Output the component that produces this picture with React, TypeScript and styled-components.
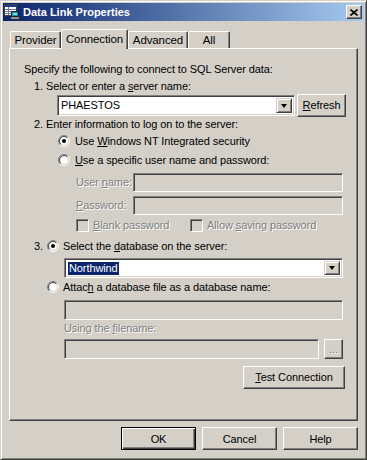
import styled, { createGlobalStyle } from "styled-components";

const FACE = "#D4D0C8";
const SHADOW = "#808080";
const DARK = "#404040";

const GlobalStyle = createGlobalStyle`
  html, body {
    margin: 0;
    padding: 0;
    background: ${FACE};
  }
  body {
    font-family: "Liberation Sans", Arial, sans-serif;
    font-size: 11px;
    letter-spacing: -0.1px;
    color: #000;
  }
`;

// Classic Win2000 radio drawn as arcs
function Radio({ checked }: { checked?: boolean }) {
  const arc = (r: number, topLeft: boolean) => {
    const d = r * 0.7071;
    const a = `${6 - d} ${6 + d}`;
    const b = `${6 + d} ${6 - d}`;
    return topLeft
      ? `M${a} A${r} ${r} 0 0 1 ${b}`
      : `M${b} A${r} ${r} 0 0 1 ${a}`;
  };
  return (
    <RadioBox width="12" height="12" viewBox="0 0 12 12">
      <circle cx="6" cy="6" r="4.5" fill="#fff" />
      <path d={arc(5.5, true)} stroke={SHADOW} fill="none" />
      <path d={arc(5.5, false)} stroke="#fff" fill="none" />
      <path d={arc(4.5, true)} stroke={DARK} fill="none" />
      <path d={arc(4.5, false)} stroke={FACE} fill="none" />
      {checked && <circle cx="6" cy="6" r="2" fill="#000" />}
    </RadioBox>
  );
}

function TitleIcon() {
  return (
    <svg width="16" height="16" viewBox="0 0 16 16">
      <rect x="0.5" y="0.5" width="12" height="11" fill="#fff" stroke="#404040" />
      <rect x="1" y="1" width="11" height="2" fill="#1c3c8c" />
      <path d="M1 5.5H12M1 7.5H12M1 9.5H12M4.5 3V11" stroke="#6a7aa8" />
      <rect x="7.5" y="7.5" width="7" height="5" fill="#2a8aa8" stroke="#202020" />
      <rect x="9" y="9" width="4" height="2" fill="#5ee0e8" />
      <rect x="7" y="13" width="8" height="2" fill="#909090" />
      <path d="M7 15.5H15" stroke="#303030" />
    </svg>
  );
}

export default function App() {
  return (
    <>
      <GlobalStyle />
      <Window>
        <TitleBar>
          <TitleIcon />
          <TitleText>Data Link Properties</TitleText>
          <CloseButton>
            <svg width="8" height="7" viewBox="0 0 8 7">
              <path d="M0.5 0.5L7.5 6.5M7.5 0.5L0.5 6.5" stroke="#000" strokeWidth="1.6" />
            </svg>
          </CloseButton>
        </TitleBar>
        <Body>
          <TabStrip>
            <Tab $w={51}>Provider</Tab>
            <Tab $w={67} $active>Connection</Tab>
            <Tab $w={60}>Advanced</Tab>
            <Tab $w={42}>All</Tab>
          </TabStrip>
          <Panel>
            <Row $mt={14} $h={13} $pl={14}>
              <span>Specify the following to connect to SQL Server data:</span>
            </Row>
            <Row $mt={4} $h={13} $pl={24}>
              <span>
                1. Select or enter a <U>s</U>erver name:
              </span>
            </Row>
            <Row $mt={1} $h={23} $pl={47} $top>
              <Combo $w={238} $h={21} $mt={1}>
                <ComboText>PHAESTOS</ComboText>
                <DropButton>
                  <Arrow />
                </DropButton>
              </Combo>
              <Button $w={49} $h={23} $ml={2}>
                <span>
                  <U>R</U>efresh
                </span>
              </Button>
            </Row>
            <Row $mt={1} $h={13} $pl={24}>
              <span>2. Enter information to log on to the server:</span>
            </Row>
            <Row $mt={3} $h={14} $pl={48}>
              <Radio checked />
              <RadioLabel>
                Use <U>W</U>indows NT Integrated security
              </RadioLabel>
            </Row>
            <Row $mt={5} $h={14} $pl={48}>
              <Radio />
              <RadioLabel>
                <U>U</U>se a specific user name and password:
              </RadioLabel>
            </Row>
            <Row $mt={6} $h={19} $pl={66}>
              <FieldLabel $w={57} $disabled>
                User <U>n</U>ame:
              </FieldLabel>
              <Field $w={210} $disabled />
            </Row>
            <Row $mt={4} $h={19} $pl={66}>
              <FieldLabel $w={57} $disabled>
                <U>P</U>assword:
              </FieldLabel>
              <Field $w={210} $disabled />
            </Row>
            <Row $mt={3} $h={14} $pl={66}>
              <CheckItem $w={114}>
                <CheckBox />
                <Disabled>
                  <U>B</U>lank password
                </Disabled>
              </CheckItem>
              <CheckItem>
                <CheckBox />
                <Disabled>
                  Allow <U>s</U>aving password
                </Disabled>
              </CheckItem>
            </Row>
            <Row $mt={7} $h={14} $pl={24}>
              <Num>3.</Num>
              <Radio checked />
              <OptionLabel>
                Select the <U>d</U>atabase on the server:
              </OptionLabel>
            </Row>
            <Row $mt={5} $h={20} $pl={54}>
              <Combo $w={279} $h={20}>
                <ComboText>
                  <Selected>Northwind</Selected>
                </ComboText>
                <DropButton>
                  <Arrow />
                </DropButton>
              </Combo>
            </Row>
            <Row $mt={2} $h={14} $pl={37}>
              <Radio />
              <OptionLabel>
                Attac<U>h</U> a database file as a database name:
              </OptionLabel>
            </Row>
            <Row $mt={6} $h={20} $pl={54}>
              <Field $w={279} $disabled />
            </Row>
            <Row $mt={2} $h={13} $pl={54}>
              <Disabled>
                Using the <U>f</U>ilename:
              </Disabled>
            </Row>
            <Row $mt={4} $h={20} $pl={54}>
              <Field $w={255} $disabled />
              <Button $w={19} $h={20} $ml={5} $disabled>
                ...
              </Button>
            </Row>
            <Row $mt={7} $h={23} $right>
              <Button $w={102} $h={23}>
                <span>
                  <U>T</U>est Connection
                </span>
              </Button>
            </Row>
          </Panel>
          <ButtonBar>
            <Button $w={75} $h={23} $default>
              OK
            </Button>
            <Button $w={75} $h={23}>
              Cancel
            </Button>
            <Button $w={75} $h={23}>
              Help
            </Button>
          </ButtonBar>
        </Body>
      </Window>
    </>
  );
}

const Window = styled.div`
  box-sizing: border-box;
  width: 367px;
  height: 460px;
  background: ${FACE};
  border: 1px solid;
  border-color: ${FACE} ${DARK} ${DARK} ${FACE};
  box-shadow: inset 1px 1px 0 #fff, inset -1px -1px 0 ${SHADOW};
  padding: 2px;
  display: flex;
  flex-direction: column;
`;

const TitleBar = styled.div`
  height: 18px;
  flex-shrink: 0;
  display: flex;
  align-items: center;
  padding: 0 2px 0 1px;
  background: linear-gradient(to right, #0a246a, #a6caf0);
`;

const TitleText = styled.span`
  margin-left: 3px;
  color: #fff;
  font-weight: bold;
  font-size: 11px;
  letter-spacing: 0;
`;

const CloseButton = styled.div`
  box-sizing: border-box;
  margin-left: auto;
  width: 16px;
  height: 14px;
  display: flex;
  align-items: center;
  justify-content: center;
  background: ${FACE};
  border: 1px solid;
  border-color: #fff ${DARK} ${DARK} #fff;
  box-shadow: inset -1px -1px 0 ${SHADOW};
`;

const Body = styled.div`
  flex: 1;
  display: flex;
  flex-direction: column;
  padding: 8px 6px 7px 6px;
`;

const TabStrip = styled.div`
  height: 19px;
  flex-shrink: 0;
  display: flex;
  align-items: flex-end;
  padding-left: 1px;
`;

const Tab = styled.div<{ $w: number; $active?: boolean }>`
  box-sizing: border-box;
  width: ${(p) => p.$w}px;
  height: ${(p) => (p.$active ? 20 : 17)}px;
  margin-bottom: ${(p) => (p.$active ? -1 : 0)}px;
  position: relative;
  z-index: ${(p) => (p.$active ? 1 : 0)};
  background: ${FACE};
  display: flex;
  align-items: center;
  justify-content: center;
  padding-bottom: ${(p) => (p.$active ? 2 : 0)}px;
  border-top: 1px solid #fff;
  border-left: 1px solid #fff;
  border-right: 1px solid ${DARK};
  border-radius: 2px 2px 0 0;
  box-shadow: inset -1px 0 0 ${SHADOW};
  font-size: 11.5px;
`;

const Panel = styled.div`
  flex: 1;
  display: flex;
  flex-direction: column;
  border: 1px solid;
  border-color: #fff ${DARK} ${DARK} #fff;
  box-shadow: inset -1px -1px 0 ${SHADOW};
`;

const Row = styled.div<{
  $mt: number;
  $h: number;
  $pl?: number;
  $top?: boolean;
  $right?: boolean;
}>`
  display: flex;
  align-items: ${(p) => (p.$top ? "flex-start" : "center")};
  justify-content: ${(p) => (p.$right ? "flex-end" : "flex-start")};
  margin-top: ${(p) => p.$mt}px;
  height: ${(p) => p.$h}px;
  padding-left: ${(p) => p.$pl ?? 0}px;
  padding-right: ${(p) => (p.$right ? 12 : 0)}px;
  line-height: 13px;
  white-space: nowrap;
`;

const U = styled.span`
  text-decoration: underline;
`;

const Disabled = styled.span`
  color: ${SHADOW};
  text-shadow: 1px 1px 0 #fff;
`;

const RadioBox = styled.svg`
  flex-shrink: 0;
  display: block;
`;

const RadioLabel = styled.span`
  margin-left: 5px;
`;

const OptionLabel = styled.span`
  margin-left: 4px;
`;

const Num = styled.span`
  width: 13px;
`;

const FieldLabel = styled.span<{ $w: number; $disabled?: boolean }>`
  width: ${(p) => p.$w}px;
  color: ${(p) => (p.$disabled ? SHADOW : "#000")};
  text-shadow: ${(p) => (p.$disabled ? "1px 1px 0 #fff" : "none")};
`;

const sunken = `
  box-sizing: border-box;
  border: 1px solid;
  border-color: ${SHADOW} #fff #fff ${SHADOW};
  box-shadow: inset 1px 1px 0 ${DARK}, inset -1px -1px 0 ${FACE};
`;

const Field = styled.div<{ $w: number; $disabled?: boolean }>`
  ${sunken}
  width: ${(p) => p.$w}px;
  height: 100%;
  background: ${(p) => (p.$disabled ? FACE : "#fff")};
`;

const Combo = styled.div<{ $w: number; $h: number; $mt?: number }>`
  ${sunken}
  width: ${(p) => p.$w}px;
  height: ${(p) => p.$h}px;
  margin-top: ${(p) => p.$mt ?? 0}px;
  background: #fff;
  display: flex;
  padding: 2px;
`;

const ComboText = styled.div`
  flex: 1;
  display: flex;
  align-items: center;
  padding-left: 1px;
`;

const Selected = styled.span`
  background: #0a246a;
  color: #fff;
  padding: 0 1px;
  outline: 1px dotted #fff;
`;

const DropButton = styled.div`
  box-sizing: border-box;
  width: 16px;
  height: 100%;
  display: flex;
  align-items: center;
  justify-content: center;
  background: ${FACE};
  border: 1px solid;
  border-color: ${FACE} ${DARK} ${DARK} ${FACE};
  box-shadow: inset 1px 1px 0 #fff, inset -1px -1px 0 ${SHADOW};
`;

const Arrow = styled.span`
  width: 0;
  height: 0;
  border-left: 3.5px solid transparent;
  border-right: 3.5px solid transparent;
  border-top: 4px solid #000;
`;

const CheckItem = styled.span<{ $w?: number }>`
  display: flex;
  align-items: center;
  gap: 4px;
  width: ${(p) => (p.$w ? `${p.$w}px` : "auto")};
`;

const CheckBox = styled.span`
  ${sunken}
  width: 13px;
  height: 13px;
  background: ${FACE};
  flex-shrink: 0;
`;

const Button = styled.div<{
  $w: number;
  $h: number;
  $ml?: number;
  $default?: boolean;
  $disabled?: boolean;
}>`
  box-sizing: border-box;
  width: ${(p) => p.$w}px;
  height: ${(p) => p.$h}px;
  margin-left: ${(p) => p.$ml ?? 0}px;
  display: flex;
  align-items: center;
  justify-content: center;
  background: ${FACE};
  border: 1px solid;
  border-color: ${(p) =>
    p.$default ? "#000" : `#fff ${DARK} ${DARK} #fff`};
  box-shadow: ${(p) =>
    p.$default
      ? `inset 1px 1px 0 #fff, inset -1px -1px 0 ${DARK}, inset -2px -2px 0 ${SHADOW}`
      : `inset -1px -1px 0 ${SHADOW}`};
  color: ${(p) => (p.$disabled ? SHADOW : "#000")};
  text-shadow: ${(p) => (p.$disabled ? "1px 1px 0 #fff" : "none")};
  white-space: nowrap;
`;

const ButtonBar = styled.div`
  display: flex;
  justify-content: flex-end;
  gap: 6px;
  margin-top: 6px;
  flex-shrink: 0;
`;
